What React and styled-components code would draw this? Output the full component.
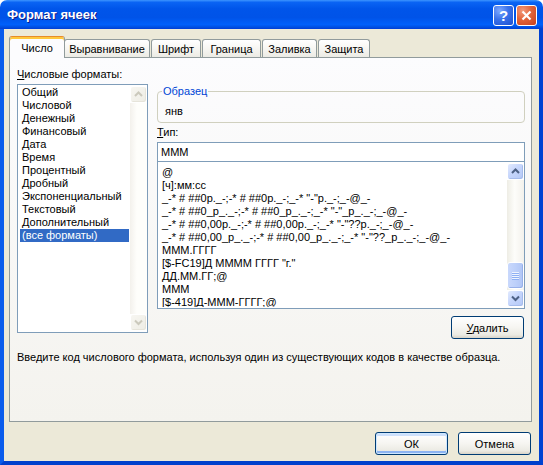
import React from "react";
import styled, { createGlobalStyle } from "styled-components";

const GlobalStyle = createGlobalStyle`
  html, body {
    margin: 0;
    padding: 0;
    background: #ffffff;
  }
  #root {
    width: 543px;
    height: 465px;
  }
  * {
    box-sizing: border-box;
  }
`;

const Window = styled.div`
  width: 543px;
  height: 465px;
  display: flex;
  flex-direction: column;
  font-family: "Liberation Sans", Arial, sans-serif;
  font-size: 11px;
  color: #000;
`;

const TitleBar = styled.div`
  flex: none;
  height: 29px;
  display: flex;
  align-items: center;
  padding: 0 6px 0 7px;
  border-radius: 7px 7px 0 0;
  background: linear-gradient(
    180deg,
    #3d95ff 0%,
    #0a64f4 8%,
    #0055ea 30%,
    #0053e8 60%,
    #0060fb 85%,
    #004ee0 94%,
    #003dd7 100%
  );
`;

const Title = styled.div`
  flex: 1;
  color: #fff;
  font-weight: bold;
  font-size: 13px;
  text-shadow: 1px 1px 0 #0a1c8c;
`;

const CaptionButton = styled.div`
  width: 21px;
  height: 21px;
  margin-left: 2px;
  margin-top: 1px;
  border: 1px solid #ffffff;
  border-radius: 3px;
  display: grid;
  place-items: center;
  color: #fff;
  font-weight: bold;
  font-size: 15px;
  background: ${(p) =>
    p.$close
      ? "radial-gradient(circle at 30% 25%, #f39a7c 0%, #e2643a 45%, #c8401c 100%)"
      : "radial-gradient(circle at 30% 25%, #7fa9ff 0%, #3a72ea 45%, #1d4fd0 100%)"};
`;

const Frame = styled.div`
  flex: 1;
  display: flex;
  flex-direction: column;
  background: #ece9d8;
  border: 4px solid #0553e3;
  border-top: 0;
  border-left-color: #0a5cec;
  border-right-color: #0042d2;
  border-bottom-color: #0040cc;
  padding: 7px 7px 6px 5px;
`;

const TabStrip = styled.div`
  flex: none;
  height: 21px;
  display: flex;
  align-items: flex-end;
  gap: 1px;
  position: relative;
  z-index: 1;
`;

const Tab = styled.div`
  width: ${(p) => p.$w}px;
  height: ${(p) => (p.$active ? 22 : 18)}px;
  margin: ${(p) => (p.$active ? "0 -2px -1px 0" : "0")};
  display: flex;
  align-items: center;
  justify-content: center;
  border: 1px solid #919b9c;
  border-bottom: 0;
  border-radius: 3px 3px 0 0;
  padding-top: ${(p) => (p.$active ? 1 : 0)}px;
  white-space: nowrap;
  background: ${(p) =>
    p.$active ? "#fcfcfe" : "linear-gradient(180deg, #ffffff 0%, #f7f6f2 50%, #ecebe5 100%)"};
  border-top-color: ${(p) => (p.$active ? "#e68b2c" : "#919b9c")};
  box-shadow: ${(p) => (p.$active ? "inset 0 2px 0 #ffc83c" : "none")};
`;

const Panel = styled.div`
  flex: 1;
  border: 1px solid #919b9c;
  background: linear-gradient(180deg, #fcfcfe 0%, #f4f3ee 100%);
  padding: 10px 6px 0 7px;
`;

const TopGrid = styled.div`
  display: grid;
  grid-template-columns: 131px 368px;
  column-gap: 9px;
  align-items: start;
`;

const Column = styled.div`
  display: flex;
  flex-direction: column;
`;

const Label = styled.div`
  line-height: 13px;
  margin-bottom: 3px;
`;

const U = styled.span`
  text-decoration: underline;
`;

const ListBox = styled.div`
  height: ${(p) => p.$h}px;
  display: flex;
  background: #fff;
  border: 1px solid #7f9db9;
  border-top-width: ${(p) => (p.$attached ? 0 : 1)}px;
  padding: 1px 0 1px 1px;
`;

const Items = styled.div`
  flex: 1;
  min-width: 0;
  overflow: hidden;
  padding: ${(p) => p.$top}px 1px 0 1px;
`;

const Item = styled.div`
  line-height: 13px;
  height: 13px;
  padding-left: 2px;
  white-space: pre;
  background: ${(p) => (p.$selected ? "#316ac5" : "transparent")};
  color: ${(p) => (p.$selected ? "#fff" : "#000")};
`;

const ScrollBar = styled.div`
  flex: none;
  width: 17px;
  display: flex;
  flex-direction: column;
`;

const ScrollButton = styled.div`
  flex: none;
  width: 17px;
  height: 17px;
  display: grid;
  place-items: center;
  border-radius: 3px;
  border: 1px solid #ffffff;
  background: ${(p) =>
    p.$disabled
      ? "linear-gradient(135deg, #f7f6f1, #eeede5)"
      : "linear-gradient(135deg, #e2eafe 0%, #c6d6fc 45%, #b4c8f6 100%)"};
  box-shadow: ${(p) =>
    p.$disabled ? "0 0 0 0 transparent, inset -1px -1px 0 #e6e4da" : "inset -1px -1px 0 #a6bcec"};
`;

const Track = styled.div`
  flex: 1;
  display: flex;
  flex-direction: column;
  justify-content: flex-end;
  background: ${(p) =>
    p.$disabled
      ? "linear-gradient(90deg, #f3f1ec 0%, #fefefb 40%)"
      : "linear-gradient(90deg, #eeede5 0%, #fdfdfa 45%, #f3f1ec 100%)"};
`;

const Thumb = styled.div`
  height: 27px;
  margin-bottom: 1px;
  border: 1px solid #ffffff;
  border-radius: 3px;
  background: linear-gradient(90deg, #c9d8fc 0%, #bdd0fa 50%, #b0c5f5 100%);
  box-shadow: inset -1px -1px 0 #98b1ea;
  display: flex;
  flex-direction: column;
  align-items: center;
  justify-content: center;
  gap: 1px;
`;

const Grip = styled.div`
  width: 7px;
  height: 1px;
  background: #eef4fe;
  box-shadow: 0 1px 0 #8eb0f4;
`;

const Group = styled.fieldset`
  margin: 17px 0 0;
  padding: 7px 7px 4px;
  border: 1px solid #d0d0bf;
  border-radius: 4px;
  min-width: 0;
`;

const Legend = styled.legend`
  color: #0046d5;
  line-height: 13px;
  padding: 0 1px;
  margin-left: -3px;
`;

const SampleText = styled.div`
  line-height: 13px;
`;

const TypeLabel = styled(Label)`
  margin-top: 3px;
`;

const Input = styled.div`
  height: 20px;
  display: flex;
  align-items: center;
  padding: 0 3px;
  background: #fff;
  border: 1px solid #7f9db9;
`;

const Button = styled.div`
  width: 73px;
  height: 23px;
  display: flex;
  align-items: center;
  justify-content: center;
  border: 1px solid #003c74;
  border-radius: 3px;
  background: linear-gradient(180deg, #ffffff 0%, #f6f5f1 50%, #ebeae3 85%, #d8d3c8 100%);
  box-shadow: ${(p) =>
    p.$default
      ? "inset 0 0 0 1px #cee7ff, inset 0 -2px 0 1px #8cb4f2, inset 0 2px 0 1px #cde0fb"
      : "none"};
`;

const DeleteButton = styled(Button)`
  margin-top: 7px;
  align-self: flex-end;
  margin-right: 1px;
`;

const Description = styled.div`
  margin-top: 12px;
  line-height: 13px;
`;

const Footer = styled.div`
  flex: none;
  display: flex;
  justify-content: flex-end;
  gap: 10px;
  margin-top: 10px;
  padding-right: 1px;
`;

function Arrow({ down, disabled }) {
  const pts = down ? "1,1.5 4.5,5 8,1.5" : "1,5 4.5,1.5 8,5";
  return (
    <svg width="9" height="7" viewBox="0 0 9 7">
      <polyline
        points={pts}
        fill="none"
        stroke={disabled ? "#cbc9bc" : "#4d6185"}
        strokeWidth="2"
      />
    </svg>
  );
}

function Scroller({ disabled }) {
  return (
    <ScrollBar>
      <ScrollButton $disabled={disabled}>
        <Arrow disabled={disabled} />
      </ScrollButton>
      <Track $disabled={disabled}>
        {!disabled && (
          <Thumb>
            <Grip />
            <Grip />
            <Grip />
            <Grip />
          </Thumb>
        )}
      </Track>
      <ScrollButton $disabled={disabled}>
        <Arrow down disabled={disabled} />
      </ScrollButton>
    </ScrollBar>
  );
}

const categories = [
  "Общий",
  "Числовой",
  "Денежный",
  "Финансовый",
  "Дата",
  "Время",
  "Процентный",
  "Дробный",
  "Экспоненциальный",
  "Текстовый",
  "Дополнительный",
  "(все форматы)",
];

const formats = [
  "@",
  "[ч]:мм:сс",
  '_-* # ##0р._-;-* # ##0р._-;_-* "-"р._-;_-@_-',
  '_-* # ##0_р_._-;-* # ##0_р_._-;_-* "-"_р_._-;_-@_-',
  '_-* # ##0,00р._-;-* # ##0,00р._-;_-* "-"??р._-;_-@_-',
  '_-* # ##0,00_р_._-;-* # ##0,00_р_._-;_-* "-"??_р_._-;_-@_-',
  "МММ.ГГГГ",
  '[$-FC19]Д ММММ ГГГГ "г."',
  "ДД.ММ.ГГ;@",
  "МММ",
  "[$-419]Д-МММ-ГГГГ;@",
];

const tabs = [
  { label: "Число", w: 56, active: true },
  { label: "Выравнивание", w: 86 },
  { label: "Шрифт", w: 50 },
  { label: "Граница", w: 59 },
  { label: "Заливка", w: 55 },
  { label: "Защита", w: 52 },
];

export default function App() {
  return (
    <Window>
      <GlobalStyle />
      <TitleBar>
        <Title>Формат ячеек</Title>
        <CaptionButton>?</CaptionButton>
        <CaptionButton $close>
          <svg width="11" height="11" viewBox="0 0 11 11">
            <path d="M1.5 1.5 L9.5 9.5 M9.5 1.5 L1.5 9.5" stroke="#fff" strokeWidth="2.2" />
          </svg>
        </CaptionButton>
      </TitleBar>
      <Frame>
        <TabStrip>
          {tabs.map((t) => (
            <Tab key={t.label} $w={t.w} $active={t.active}>
              {t.label}
            </Tab>
          ))}
        </TabStrip>
        <Panel>
          <TopGrid>
            <Column>
              <Label>
                <U>Ч</U>исловые форматы:
              </Label>
              <ListBox $h={249}>
                <Items $top={0}>
                  {categories.map((c) => (
                    <Item key={c} $selected={c === "(все форматы)"}>
                      {c}
                    </Item>
                  ))}
                </Items>
                <Scroller disabled />
              </ListBox>
            </Column>
            <Column>
              <Group>
                <Legend>Образец</Legend>
                <SampleText>янв</SampleText>
              </Group>
              <TypeLabel>
                <U>Т</U>ип:
              </TypeLabel>
              <Input>МММ</Input>
              <ListBox $h={147} $attached>
                <Items $top={3}>
                  {formats.map((f) => (
                    <Item key={f}>{f}</Item>
                  ))}
                </Items>
                <Scroller />
              </ListBox>
              <DeleteButton>
                <span>
                  <U>У</U>далить
                </span>
              </DeleteButton>
            </Column>
          </TopGrid>
          <Description>
            Введите код числового формата, используя один из существующих кодов в качестве образца.
          </Description>
        </Panel>
        <Footer>
          <Button $default>ОК</Button>
          <Button>Отмена</Button>
        </Footer>
      </Frame>
    </Window>
  );
}
